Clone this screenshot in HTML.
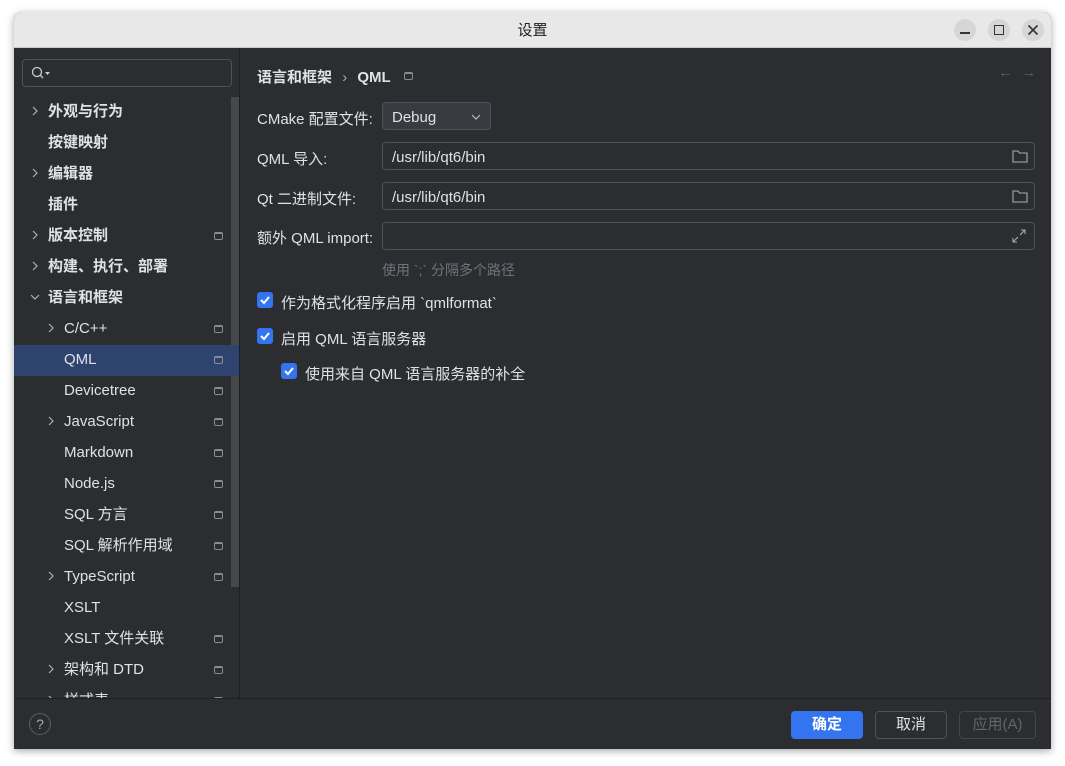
<!DOCTYPE html><html><head><meta charset="utf-8"><style>
*{margin:0;padding:0;box-sizing:border-box}
body{width:1065px;height:766px;background:#fff;font-family:"Liberation Sans","Noto Sans CJK SC",sans-serif;position:relative;overflow:hidden;color:#dfe1e5;font-size:15px}
.win{position:absolute;left:14px;top:12px;width:1037px;height:737px;background:#2b2d30;border-radius:8px 8px 0 0;overflow:hidden;box-shadow:0 2px 8px rgba(0,0,0,.35)}
.title{position:absolute;left:0;top:0;width:100%;height:36px;background:#e8e8e8;color:#222;text-align:center;line-height:37px;font-size:15px;border-bottom:1px solid #c8c8c8}
.wb{position:absolute;top:7px;width:22px;height:22px;border-radius:11px;background:#d6d6d6}
.a{position:absolute}
.side{position:absolute;left:0;top:37px;width:226px;height:649px;border-right:1px solid #1e1f22;overflow:hidden}
.row{position:absolute;left:0;width:226px;height:31px;line-height:31px;white-space:nowrap}
.chev{position:absolute;top:10px}
.pin{position:absolute;left:200px;top:12px;width:9px;height:8px;border:1px solid #8a8c90;border-radius:2px;border-top-width:2px}
.inp{position:absolute;left:368px;width:653px;height:28px;border:1px solid #4e5157;border-radius:4px;line-height:29px;padding-left:9px}
.lbl{position:absolute;left:243px}
.cb{position:absolute;width:16px;height:16px;background:#3574f0;border-radius:3px}
.cb svg{position:absolute;left:2px;top:2px}
.btn{position:absolute;top:699px;height:28px;border-radius:4px;text-align:center;line-height:28px;font-size:15px}
</style></head><body>
<svg width="0" height="0" style="position:absolute"><defs><symbol id="cr" viewBox="0 0 8 10"><path d="M2 1l4 4-4 4" stroke="#aeb1b6" fill="none" stroke-width="1.2"/></symbol><symbol id="cd" viewBox="0 0 10 8"><path d="M1 2l4 4 4-4" stroke="#aeb1b6" fill="none" stroke-width="1.2"/></symbol></defs></svg>
<div class="win">
<div class="title">设置</div>
<div class="wb" style="left:940px"><div class="a" style="left:6px;top:13px;width:10px;height:1.5px;background:#333"></div></div>
<div class="wb" style="left:974px"><div class="a" style="left:6px;top:6px;width:10px;height:10px;border:1.5px solid #333"></div></div>
<div class="wb" style="left:1008px"><svg class="a" style="left:5px;top:5px" width="12" height="12"><path d="M1.5 1.5L10.5 10.5M10.5 1.5L1.5 10.5" stroke="#333" stroke-width="1.6"/></svg></div>

<div class="side">
<div class="a" style="left:8px;top:10px;width:210px;height:28px;border:1px solid #4e5157;border-radius:4px"><svg class="a" style="left:8px;top:6px" width="20" height="14"><circle cx="6" cy="6" r="4.5" stroke="#ccc" fill="none" stroke-width="1.3"/><path d="M9 9L12 12" stroke="#ccc" stroke-width="1.3"/><path d="M14 6h5l-2.5 3z" fill="#ccc"/></svg></div>
<div class="a" style="left:217px;top:48px;width:8px;height:490px;background:#46484c"></div>
<div class="row" style="top:296px;background:#2e436e;width:225px"></div>
<div style="position:absolute;left:0;top:47px;width:226px">
<div class="row" style="top:0"><svg class="chev" style="left:17px" width="8" height="10"><use href="#cr"/></svg><b style="position:absolute;left:34px">外观与行为</b></div>
<div class="row" style="top:31px"><b style="position:absolute;left:34px">按键映射</b></div>
<div class="row" style="top:62px"><svg class="chev" style="left:17px" width="8" height="10"><use href="#cr"/></svg><b style="position:absolute;left:34px">编辑器</b></div>
<div class="row" style="top:93px"><b style="position:absolute;left:34px">插件</b></div>
<div class="row" style="top:124px"><svg class="chev" style="left:17px" width="8" height="10"><use href="#cr"/></svg><b style="position:absolute;left:34px">版本控制</b><i class="pin"></i></div>
<div class="row" style="top:155px"><svg class="chev" style="left:17px" width="8" height="10"><use href="#cr"/></svg><b style="position:absolute;left:34px">构建、执行、部署</b></div>
<div class="row" style="top:186px"><svg class="chev" style="left:16px;top:11px" width="10" height="8"><use href="#cd"/></svg><b style="position:absolute;left:34px">语言和框架</b></div>
<div class="row" style="top:217px"><svg class="chev" style="left:33px" width="8" height="10"><use href="#cr"/></svg><span style="position:absolute;left:50px">C/C++</span><i class="pin"></i></div>
<div class="row" style="top:248px"><span style="position:absolute;left:50px">QML</span><i class="pin"></i></div>
<div class="row" style="top:279px"><span style="position:absolute;left:50px">Devicetree</span><i class="pin"></i></div>
<div class="row" style="top:310px"><svg class="chev" style="left:33px" width="8" height="10"><use href="#cr"/></svg><span style="position:absolute;left:50px">JavaScript</span><i class="pin"></i></div>
<div class="row" style="top:341px"><span style="position:absolute;left:50px">Markdown</span><i class="pin"></i></div>
<div class="row" style="top:372px"><span style="position:absolute;left:50px">Node.js</span><i class="pin"></i></div>
<div class="row" style="top:403px"><span style="position:absolute;left:50px">SQL 方言</span><i class="pin"></i></div>
<div class="row" style="top:434px"><span style="position:absolute;left:50px">SQL 解析作用域</span><i class="pin"></i></div>
<div class="row" style="top:465px"><svg class="chev" style="left:33px" width="8" height="10"><use href="#cr"/></svg><span style="position:absolute;left:50px">TypeScript</span><i class="pin"></i></div>
<div class="row" style="top:496px"><span style="position:absolute;left:50px">XSLT</span></div>
<div class="row" style="top:527px"><span style="position:absolute;left:50px">XSLT 文件关联</span><i class="pin"></i></div>
<div class="row" style="top:558px"><svg class="chev" style="left:33px" width="8" height="10"><use href="#cr"/></svg><span style="position:absolute;left:50px">架构和 DTD</span><i class="pin"></i></div>
<div class="row" style="top:589px"><svg class="chev" style="left:33px" width="8" height="10"><use href="#cr"/></svg><span style="position:absolute;left:50px">样式表</span><i class="pin"></i></div>
</div>
</div>

<div class="a" style="left:243px;top:54px"><b>语言和框架</b> <span style="color:#aaa;margin:0 6px">›</span> <b>QML</b></div>
<i class="pin" style="left:390px;top:60px"></i>
<div class="a" style="left:984px;top:52px;color:#5a5d62;font-size:15px">←&nbsp;&nbsp;→</div>

<div class="lbl" style="top:96px">CMake 配置文件:</div>
<div class="a" style="left:368px;top:90px;width:109px;height:28px;border:1px solid #4e5157;border-radius:4px;background:#393b40;line-height:29px;padding-left:9px">Debug<svg class="a" style="left:88px;top:11px" width="10" height="6"><path d="M1 1l4 4 4-4" stroke="#bbb" fill="none" stroke-width="1.2"/></svg></div>
<div class="lbl" style="top:136px">QML 导入:</div>
<div class="inp" style="top:130px">/usr/lib/qt6/bin<svg class="a" style="left:629px;top:6px" width="16" height="14"><path d="M1 2h5l1.5 2H15v9H1z" stroke="#aaa" fill="none" stroke-width="1.1"/></svg></div>
<div class="lbl" style="top:176px">Qt 二进制文件:</div>
<div class="inp" style="top:170px">/usr/lib/qt6/bin<svg class="a" style="left:629px;top:6px" width="16" height="14"><path d="M1 2h5l1.5 2H15v9H1z" stroke="#aaa" fill="none" stroke-width="1.1"/></svg></div>
<div class="lbl" style="top:215px">额外 QML import:</div>
<div class="inp" style="top:210px"><svg class="a" style="left:628px;top:5px" width="16" height="16"><path d="M9 7l5-5M10 2h4v4M7 9l-5 5M2 10v4h4" stroke="#aaa" fill="none" stroke-width="1.1"/></svg></div>
<div class="a" style="left:368px;top:248px;color:#6f737a;font-size:14px">使用 `;` 分隔多个路径</div>

<div class="cb" style="left:243px;top:280px"><svg width="12" height="12"><path d="M2 6l3 3 5-6" stroke="#fff" fill="none" stroke-width="2"/></svg></div>
<div class="a" style="left:267px;top:280px">作为格式化程序启用 `qmlformat`</div>
<div class="cb" style="left:243px;top:316px"><svg width="12" height="12"><path d="M2 6l3 3 5-6" stroke="#fff" fill="none" stroke-width="2"/></svg></div>
<div class="a" style="left:267px;top:316px">启用 QML 语言服务器</div>
<div class="cb" style="left:267px;top:351px"><svg width="12" height="12"><path d="M2 6l3 3 5-6" stroke="#fff" fill="none" stroke-width="2"/></svg></div>
<div class="a" style="left:291px;top:351px">使用来自 QML 语言服务器的补全</div>

<div class="a" style="left:0;top:686px;width:100%;height:1px;background:#1e1f22"></div>
<div class="a" style="left:15px;top:701px;width:22px;height:22px;border:1px solid #5a5d62;border-radius:11px;text-align:center;line-height:20px;color:#aaa;font-size:14px">?</div>
<div class="btn" style="left:777px;width:72px;background:#3574f0;color:#fff;font-weight:bold">确定</div>
<div class="btn" style="left:861px;width:72px;border:1px solid #4e5157;line-height:26px">取消</div>
<div class="btn" style="left:945px;width:77px;border:1px solid #43454a;color:#62656b;line-height:26px">应用(A)</div>
</div>
</body></html>
